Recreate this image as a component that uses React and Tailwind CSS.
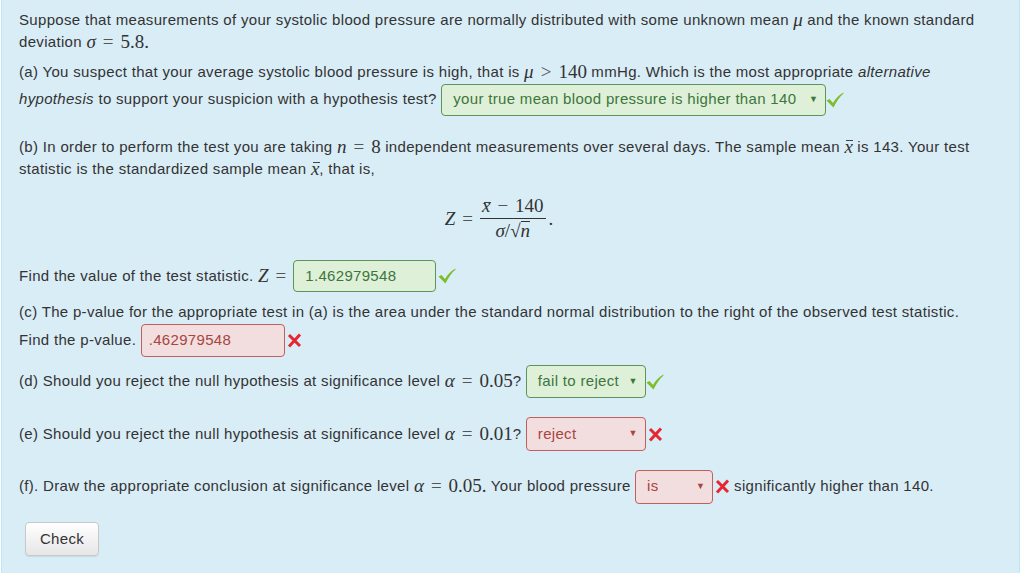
import React from "react";

const M = ({ children, className = "" }) => (
  <span className={`font-['Liberation_Serif',serif] text-[19px] tracking-normal text-[#333] ${className}`}>{children}</span>
);
const V = ({ children }) => <M className="italic">{children}</M>;
const Op = ({ children }) => (
  <span className="font-['Liberation_Serif',serif] text-[19px] tracking-normal text-[#555] mx-[7px]">{children}</span>
);
const Eq = () => <Op>=</Op>;
const XBar = () => (
  <span className="relative inline-block">
    <V>x</V>
    <span className="absolute left-[2px] top-[7px] w-[7px] border-t border-[#444]"></span>
  </span>
);

const Check = () => (
  <svg width="18" height="16" viewBox="0 0 18 16" className="shrink-0">
    <path d="M0.5 8.5 L3.5 7 L7 11 C9.5 6.5 13 3 17.5 0.5 L17.5 1.5 C13.5 5 10.5 9.5 7.5 15.5 Z" fill="#7dbd2a" />
  </svg>
);
const Cross = () => (
  <svg width="15" height="15" viewBox="0 0 15 15" className="shrink-0">
    <path d="M2 2 L13 13 M13 1.5 L2 13.5" stroke="#e8262f" strokeWidth="3" strokeLinecap="butt" />
  </svg>
);

const Box = ({ ok, children, w, select, h = "h-[32px]" }) => (
  <span
    className={`inline-flex items-center justify-between ${h} ${w} rounded-[4px] border px-[11px] shrink-0 ${
      ok
        ? "bg-[#dff0d8] border-[#5e935b] text-[#3c763d]"
        : "bg-[#f2dede] border-[#c25f5d] text-[#a94442]"
    }`}
  >
    <span>{children}</span>
    {select && (
      <span className={`text-[9px] -mr-[4px] ${ok ? "text-[#3c763d]" : "text-[#a94442]"}`}>▼</span>
    )}
  </span>
);

const Line = ({ children, className = "" }) => (
  <div className={`flex items-center whitespace-pre ${className}`}>{children}</div>
);

export default function App() {
  return (
    <div className="w-[1024px] h-[577px] bg-white font-['Liberation_Sans',Arial,sans-serif] text-[15px] tracking-[0.32px] text-[#333]">
      <div className="ml-[1px] w-[1019px] -mt-[4px] h-[580px] rounded-[4px] border border-[#bce8f1] bg-[#d9edf7] pl-[17px] pt-[12px]">
        <Line className="h-[22px]">
          Suppose that measurements of your systolic blood pressure are normally distributed with some unknown mean <V>μ</V> and the known standard
        </Line>
        <Line className="h-[22px]">
          deviation <V>σ</V><Eq /><M>5.8</M><M>.</M>
        </Line>
        <Line className="h-[22px] mt-[8px]">
          (a) You suspect that your average systolic blood pressure is high, that is <V>μ</V><Op>&gt;</Op><M>140</M> mmHg. Which is the most appropriate <i>alternative</i>
        </Line>
        <Line className="h-[31px] mt-[1px]">
          <i>hypothesis</i> to support your suspicion with a hypothesis test? <Box ok select w="w-[385px]" h="h-[32px]">your true mean blood pressure is higher than 140</Box><Check />
        </Line>
        <Line className="h-[22px] mt-[21px]">
          (b) In order to perform the test you are taking <V>n</V><Eq /><M>8</M> independent measurements over several days. The sample mean <XBar /> is 143. Your test
        </Line>
        <Line className="h-[22px]">
          statistic is the standardized sample mean <XBar />, that is,
        </Line>
        <div className="flex justify-center items-center h-[72px] mt-[3px] pr-[40px]">
          <V>Z</V>
          <Eq />
          <span className="inline-flex flex-col items-center">
            <span className="px-[2px] leading-[22px]"><XBar /><Op>−</Op><M>140</M></span>
            <span className="w-full border-t border-[#333]"></span>
            <span className="leading-[24px]">
              <V>σ</V><M>/</M><M>√</M><span className="border-t border-[#333] pt-[1px]"><V>n</V></span>
            </span>
          </span>
          <M className="ml-[3px]">.</M>
        </div>
        <Line className="h-[32px] mt-[5px]">
          Find the value of the test statistic. <V>Z</V><Eq /><Box ok w="w-[143px]">1.462979548</Box><span className="ml-[2px]"><Check /></span>
        </Line>
        <Line className="h-[22px] mt-[9px]">
          (c) The p-value for the appropriate test in (a) is the area under the standard normal distribution to the right of the observed test statistic.
        </Line>
        <Line className="h-[33px] mt-[1px]">
          Find the p-value. <Box w="w-[144px]" h="h-[33px]"><span className="-ml-[4px]">.462979548</span></Box><span className="ml-[2px]"><Cross /></span>
        </Line>
        <Line className="h-[33px] mt-[8px]">
          (d) Should you reject the null hypothesis at significance level <V>α</V><Eq /><M>0.05</M>? <Box ok select w="w-[120px]" h="h-[33px]">fail to reject</Box><Check />
        </Line>
        <Line className="h-[34px] mt-[19px]">
          (e) Should you reject the null hypothesis at significance level <V>α</V><Eq /><M>0.01</M>? <Box select w="w-[120px]" h="h-[34px]">reject</Box><span className="ml-[2px]"><Cross /></span>
        </Line>
        <Line className="h-[33px] mt-[19px]">
          (f). Draw the appropriate conclusion at significance level <V>α</V><Eq /><M>0.05</M><M>.</M> Your blood pressure <Box select w="w-[78px]" h="h-[34px]">is</Box><span className="ml-[2px] mr-[4px]"><Cross /></span>significantly higher than 140.
        </Line>
        <div className="mt-[19px] ml-[6px]">
          <button className="h-[34px] w-[74px] rounded-[4px] border border-[#c8c8c8] bg-gradient-to-b from-white to-[#e6e6e6] text-[15px] tracking-[0.3px] text-[#333] shadow-[0_1px_1px_rgba(0,0,0,0.08)]">
            Check
          </button>
        </div>
      </div>
    </div>
  );
}
